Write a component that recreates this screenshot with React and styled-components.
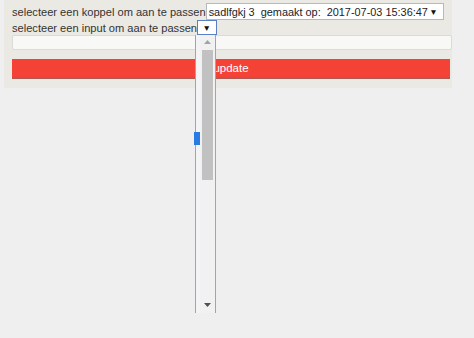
import React from 'react'
import styled, { createGlobalStyle } from 'styled-components'

const Global = createGlobalStyle`
body{
margin:0;
background:#efefef;
font-family:"Liberation Sans", Arial, sans-serif;
}
`

const Page = styled.div`
width:474px;
height:338px;
position:relative;
overflow:hidden;
`

const Panel = styled.div`
position:relative;
margin-left:4px;
width:448px;
background:#ebe9e3;
padding:3px 0 9px 8px;
box-sizing:border-box;
font-size:11.1px;
color:#333;
`

const Row = styled.div`
display:flex;
align-items:center;
height:${p => p.h}px;
`

const Label = styled.span`
white-space:nowrap;
`

const Select = styled.div`
display:flex;
align-items:center;
justify-content:space-between;
box-sizing:border-box;
height:${p => p.h}px;
width:${p => p.w}px;
background:#fff;
border:1px solid ${p => (p.focus ? '#5b7fc7' : '#b8b8b8')};
padding:0 5px 0 2px;
color:#222;
white-space:pre;
font-size:10.9px;
`

const Arrow = styled.span`
font-size:8.5px;
color:#111;
`

const Field = styled.div`
width:438px;
height:13px;
background:#f8f8f7;
border:1px solid #dddbd6;
border-radius:2px;
`

const Button = styled.div`
margin-top:9px;
width:438px;
height:18px;
background:#f44336;
border-bottom:2px solid #b05a55;
color:#fff;
display:flex;
align-items:center;
justify-content:center;
font-size:11.5px;
`

const List = styled.div`
position:absolute;
left:195px;
top:35px;
width:21px;
height:278px;
box-sizing:border-box;
border-left:1px solid #8fa6d2;
border-right:1px solid #8fa6d2;
background:#f2f2f6;
display:flex;
`

const Items = styled.div`
width:4px;
position:relative;
background:#f4f4f6;
`

const Selected = styled.div`
position:absolute;
left:-2px;
top:97px;
width:6px;
height:13px;
background:#2a7be4;
`

const Track = styled.div`
flex:1;
position:relative;
background:#f1f1f1;
`

const Thumb = styled.div`
position:absolute;
left:2px;
right:2px;
top:15px;
height:130px;
background:#c1c1c1;
`

const ScrollArrow = styled.div`
position:absolute;
left:0;
right:0;
${p => (p.down ? 'bottom:6px;' : 'top:5px;')}
display:flex;
justify-content:center;
svg{display:block;}
`

export default function App() {
  return (
    <Page>
      <Global />
      <Panel>
        <Row h={17}>
          <Label>selecteer een koppel om aan te passen</Label>
          <Select w={238} h={17}>
            <span>sadlfgkj 3  gemaakt op:  2017-07-03 15:36:47</span>
            <Arrow>▼</Arrow>
          </Select>
        </Row>
        <Row h={15}>
          <Label>selecteer een input om aan te passen</Label>
          <Select w={20} h={15} focus>
            <span />
            <Arrow>▼</Arrow>
          </Select>
        </Row>
        <Field />
        <Button>update</Button>
      </Panel>
      <List>
        <Items>
          <Selected />
        </Items>
        <Track>
          <ScrollArrow>
            <svg width="7" height="4" viewBox="0 0 7 4"><path d="M0 4L3.5 0L7 4Z" fill="#a3a3a3" /></svg>
          </ScrollArrow>
          <Thumb />
          <ScrollArrow down>
            <svg width="7" height="4" viewBox="0 0 7 4"><path d="M0 0L3.5 4L7 0Z" fill="#505050" /></svg>
          </ScrollArrow>
        </Track>
      </List>
    </Page>
  )
}
